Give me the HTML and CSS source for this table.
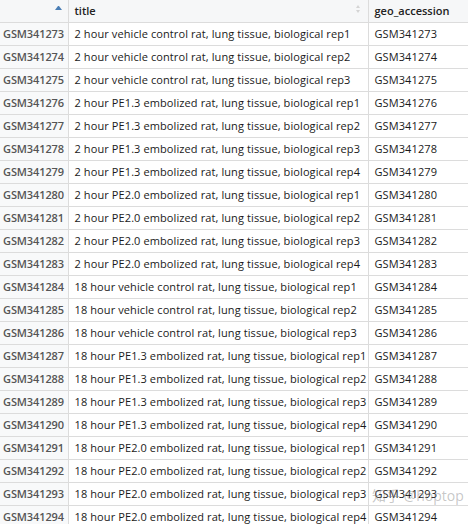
FILE: index.html
```html
<!DOCTYPE html>
<html lang="en">
	<head>
		<meta charset="UTF-8" />
		<title>GEO samples</title>
		<link rel="stylesheet" href="styles.css">
	</head>
	<body>
		<div class="viewer">
			<table class="grid">
				<colgroup>
					<col class="col-rn">
					<col class="col-title">
					<col class="col-geo">
				</colgroup>
				<thead>
					<tr>
						<th class="rn-head"><span class="sort sort-up"></span></th>
						<th>title<span class="sort sort-both"></span></th>
						<th>geo_accession<span class="sort sort-both"></span></th>
					</tr>
				</thead>
				<tbody>
					<tr><td class="rn">GSM341273</td><td>2 hour vehicle control rat, lung tissue, biological rep1</td><td>GSM341273</td></tr>
					<tr><td class="rn">GSM341274</td><td>2 hour vehicle control rat, lung tissue, biological rep2</td><td>GSM341274</td></tr>
					<tr><td class="rn">GSM341275</td><td>2 hour vehicle control rat, lung tissue, biological rep3</td><td>GSM341275</td></tr>
					<tr><td class="rn">GSM341276</td><td>2 hour PE1.3 embolized rat, lung tissue, biological rep1</td><td>GSM341276</td></tr>
					<tr><td class="rn">GSM341277</td><td>2 hour PE1.3 embolized rat, lung tissue, biological rep2</td><td>GSM341277</td></tr>
					<tr><td class="rn">GSM341278</td><td>2 hour PE1.3 embolized rat, lung tissue, biological rep3</td><td>GSM341278</td></tr>
					<tr><td class="rn">GSM341279</td><td>2 hour PE1.3 embolized rat, lung tissue, biological rep4</td><td>GSM341279</td></tr>
					<tr><td class="rn">GSM341280</td><td>2 hour PE2.0 embolized rat, lung tissue, biological rep1</td><td>GSM341280</td></tr>
					<tr><td class="rn">GSM341281</td><td>2 hour PE2.0 embolized rat, lung tissue, biological rep2</td><td>GSM341281</td></tr>
					<tr><td class="rn">GSM341282</td><td>2 hour PE2.0 embolized rat, lung tissue, biological rep3</td><td>GSM341282</td></tr>
					<tr><td class="rn">GSM341283</td><td>2 hour PE2.0 embolized rat, lung tissue, biological rep4</td><td>GSM341283</td></tr>
					<tr><td class="rn">GSM341284</td><td>18 hour vehicle control rat, lung tissue, biological rep1</td><td>GSM341284</td></tr>
					<tr><td class="rn">GSM341285</td><td>18 hour vehicle control rat, lung tissue, biological rep2</td><td>GSM341285</td></tr>
					<tr><td class="rn">GSM341286</td><td>18 hour vehicle control rat, lung tissue, biological rep3</td><td>GSM341286</td></tr>
					<tr><td class="rn">GSM341287</td><td>18 hour PE1.3 embolized rat, lung tissue, biological rep1</td><td>GSM341287</td></tr>
					<tr><td class="rn">GSM341288</td><td>18 hour PE1.3 embolized rat, lung tissue, biological rep2</td><td>GSM341288</td></tr>
					<tr><td class="rn">GSM341289</td><td>18 hour PE1.3 embolized rat, lung tissue, biological rep3</td><td>GSM341289</td></tr>
					<tr><td class="rn">GSM341290</td><td>18 hour PE1.3 embolized rat, lung tissue, biological rep4</td><td>GSM341290</td></tr>
					<tr><td class="rn">GSM341291</td><td>18 hour PE2.0 embolized rat, lung tissue, biological rep1</td><td>GSM341291</td></tr>
					<tr><td class="rn">GSM341292</td><td>18 hour PE2.0 embolized rat, lung tissue, biological rep2</td><td>GSM341292</td></tr>
					<tr><td class="rn">GSM341293</td><td>18 hour PE2.0 embolized rat, lung tissue, biological rep3</td><td>GSM341293</td></tr>
					<tr><td class="rn">GSM341294</td><td>18 hour PE2.0 embolized rat, lung tissue, biological rep4</td><td>GSM341294</td></tr>
				</tbody>
			</table>
			<div class="watermark">知乎 @hoptop</div>
		</div>
	</body>
</html>
```

FILE: styles.css
```css
* { margin: 0; padding: 0; box-sizing: border-box; }
html, body {
	width: 468px;
	height: 524px;
	overflow: hidden;
	background: #fff;
}
body {
	font-family: "Open Sans", "Noto Sans CJK SC", sans-serif;
	font-size: 11px;
	color: #1a1a1a;
}
.viewer {
	position: relative;
	width: 468px;
	height: 524px;
	overflow: hidden;
}
.grid {
	border-collapse: collapse;
	table-layout: fixed;
	width: 480px;
}
.col-rn { width: 68px; }
.col-title { width: 300px; }
.col-geo { width: 112px; }
th, td {
	height: 23px;
	padding: 0 6px;
	border: 1px solid #dcdcdc;
	white-space: nowrap;
	overflow: hidden;
	text-align: left;
	vertical-align: middle;
}
td { letter-spacing: 0.1px; }
tr:first-child td { border-top-color: #c8c8c8; }
th {
	position: relative;
	height: 22px;
	background: #f6f7f8;
	font-weight: 600;
	color: #222;
	border-top: none;
}
th:first-child, td:first-child { border-left: none; }
td.rn {
	padding: 0 2px 0 3px;
	background: #f8f9fa;
	font-weight: 600;
	color: #555;
	letter-spacing: -0.1px;
}
.sort {
	position: absolute;
	right: 6px;
	top: 5px;
	width: 7px;
	height: 9px;
}
.sort-up {
	border-left: 3.5px solid transparent;
	border-right: 3.5px solid transparent;
	border-bottom: 4px solid #4a7eb5;
	height: 0;
	top: 6px;
}
.sort-both::before, .sort-both::after {
	content: "";
	position: absolute;
	left: 1px;
	border-left: 2.5px solid transparent;
	border-right: 2.5px solid transparent;
}
.sort-both::before { top: 0; border-bottom: 3px solid #d4d4d4; }
.sort-both::after { top: 5px; border-top: 3px solid #d4d4d4; }
.watermark {
	position: absolute;
	left: 372px;
	top: 487px;
	height: 18px;
	font-size: 14px;
	line-height: 18px;
	color: rgba(130, 130, 130, 0.45);
	white-space: nowrap;
}
```
